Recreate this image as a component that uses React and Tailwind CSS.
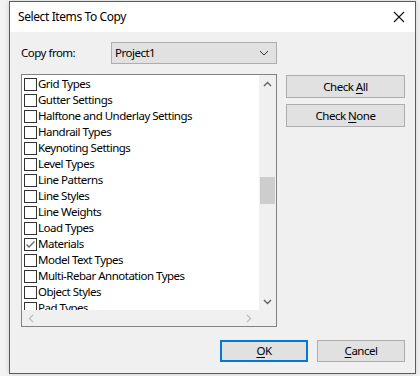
import React from "react";

const items = [
  "Grid Types",
  "Gutter Settings",
  "Halftone and Underlay Settings",
  "Handrail Types",
  "Keynoting Settings",
  "Level Types",
  "Line Patterns",
  "Line Styles",
  "Line Weights",
  "Load Types",
  "Materials",
  "Model Text Types",
  "Multi-Rebar Annotation Types",
  "Object Styles",
  "Pad Types",
];

function Check({ checked }) {
  return (
    <div className="w-[13px] h-[13px] border border-[#333333] bg-white flex items-center justify-center shrink-0">
      {checked && (
        <svg width="11" height="11" viewBox="0 0 11 11">
          <path d="M1.5 5.5 L4 8 L9.5 2.5" fill="none" stroke="#666" strokeWidth="1.3" />
        </svg>
      )}
    </div>
  );
}

export default function App() {
  const font = { fontFamily: '"Noto Sans", "Segoe UI", Arial, sans-serif' };
  return (
    <div className="w-[420px] h-[376px] bg-[#f3f3f3] pt-[1px] pl-[9px] text-[11.5px] tracking-[-0.5px] text-black" style={font}>
      <div className="w-[407px] h-[373px] border border-[#5a5a5a] bg-[#f0f0f0] flex flex-col shadow-[0_0_6px_rgba(0,0,0,0.15)]">
        {/* title bar */}
        <div className="h-[30px] bg-white flex items-center justify-between pl-[8px] pr-[10px] shrink-0">
          <span className="text-[12px] tracking-[-0.4px]">Select Items To Copy</span>
          <svg width="12" height="12" viewBox="0 0 12 12">
            <path d="M1 1 L11 11 M11 1 L1 11" stroke="#111" strokeWidth="1.1" />
          </svg>
        </div>
        {/* body */}
        <div className="flex flex-col pl-[11px]">
          <div className="flex items-center h-[22px] mt-[10px]">
            <span className="w-[90px] leading-none">Copy from:</span>
            <div className="w-[166px] h-[22px] bg-[#e1e1e1] border border-[#adadad] flex items-center justify-between pl-[3px] pr-[7px]">
              <span>Project1</span>
              <svg width="10" height="6" viewBox="0 0 10 6">
                <path d="M1 1 L5 5 L9 1" fill="none" stroke="#333" strokeWidth="1" />
              </svg>
            </div>
          </div>
          <div className="flex mt-[10px]">
            {/* list box */}
            <div className="w-[256px] h-[253px] border border-[#828282] bg-white flex flex-col">
              <div className="flex h-[235px]">
                <div className="flex-1 overflow-hidden pl-[2px] pt-[1px]">
                  {items.map((t) => (
                    <div key={t} className="h-[16px] flex items-center gap-[1px] whitespace-nowrap">
                      <Check checked={t === "Materials"} />
                      <span className="leading-none">{t}</span>
                    </div>
                  ))}
                </div>
                <div className="w-[17px] bg-[#f0f0f0] flex flex-col items-center">
                  <div className="h-[17px] flex items-center justify-center">
                    <svg width="9" height="6" viewBox="0 0 9 6">
                      <path d="M1 5 L4.5 1.5 L8 5" fill="none" stroke="#606060" strokeWidth="1.4" />
                    </svg>
                  </div>
                  <div className="h-[85px]" />
                  <div className="w-[15px] h-[27px] bg-[#cdcdcd]" />
                  <div className="flex-1" />
                  <div className="h-[17px] flex items-center justify-center">
                    <svg width="9" height="6" viewBox="0 0 9 6">
                      <path d="M1 1 L4.5 4.5 L8 1" fill="none" stroke="#606060" strokeWidth="1.4" />
                    </svg>
                  </div>
                </div>
              </div>
              <div className="h-[16px] bg-[#f0f0f0] flex items-center justify-between pl-[6px] pr-[24px]">
                <svg width="6" height="9" viewBox="0 0 6 9">
                  <path d="M5 1 L1.5 4.5 L5 8" fill="none" stroke="#c0c0c0" strokeWidth="1.4" />
                </svg>
                <svg width="6" height="9" viewBox="0 0 6 9">
                  <path d="M1 1 L4.5 4.5 L1 8" fill="none" stroke="#c0c0c0" strokeWidth="1.4" />
                </svg>
              </div>
            </div>
            {/* side buttons */}
            <div className="flex flex-col gap-[6px] ml-[9px] mt-[1px]">
              <div className="w-[119px] h-[23px] bg-[#e1e1e1] border border-[#adadad] flex items-center justify-center">
                <span>Check <span className="underline underline-offset-2">A</span>ll</span>
              </div>
              <div className="w-[119px] h-[23px] bg-[#e1e1e1] border border-[#adadad] flex items-center justify-center">
                <span>Check <span className="underline underline-offset-2">N</span>one</span>
              </div>
            </div>
          </div>
          <div className="flex justify-end gap-[9px] mt-[13px] pr-[10px]">
            <div className="w-[88px] h-[22px] bg-[#e1e1e1] border-2 border-[#0078d7] flex items-center justify-center">
              <span><span className="underline underline-offset-2">O</span>K</span>
            </div>
            <div className="w-[88px] h-[22px] bg-[#e1e1e1] border border-[#adadad] flex items-center justify-center">
              <span><span className="underline underline-offset-2">C</span>ancel</span>
            </div>
          </div>
        </div>
      </div>
    </div>
  );
}
